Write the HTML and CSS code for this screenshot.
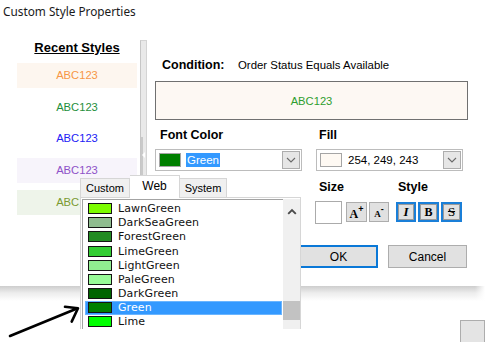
FILE: index.html
```html
<!DOCTYPE html>
<html>
<head>
<meta charset="utf-8">
<link rel="stylesheet" href="styles.css">
</head>
<body>
<div class="dialog">
  <div class="title">Custom Style Properties</div>
  <div class="body">
    <aside class="recent">
      <div class="recent-head">Recent Styles</div>
      <div class="item i1">ABC123</div>
      <div class="item i2">ABC123</div>
      <div class="item i3">ABC123</div>
      <div class="item i4">ABC123</div>
      <div class="item i5">ABC123</div>
    </aside>
    <div class="splitter">
      <div class="split-top"></div>
      <div class="split-bottom"><span class="split-tri"></span></div>
    </div>
    <main class="props">
      <div class="cond"><span class="cond-label">Condition:</span><span class="cond-val">Order Status Equals Available</span></div>
      <div class="preview">ABC123</div>
      <div class="labels"><span class="lab-font">Font Color</span><span class="lab-fill">Fill</span></div>
      <div class="combos">
        <div class="combo">
          <span class="sw sw-green"></span><span class="ctext sel">Green</span>
          <span class="drop"><svg width="10" height="6" viewBox="0 0 10 6"><polyline points="1,1 5,5 9,1" fill="none" stroke="#6a6a6a" stroke-width="1.1"/></svg></span>
        </div>
        <div class="combo">
          <span class="sw sw-fill"></span><span class="ctext">254, 249, 243</span>
          <span class="drop"><svg width="10" height="6" viewBox="0 0 10 6"><polyline points="1,1 5,5 9,1" fill="none" stroke="#6a6a6a" stroke-width="1.1"/></svg></span>
        </div>
      </div>
      <div class="sslabels"><span class="lab-size">Size</span><span class="lab-style">Style</span></div>
      <div class="tools">
        <div class="sizebox"></div>
        <div class="tbtn t-grow"><span class="ga">A</span><span class="gsup">+</span></div>
        <div class="tbtn t-shrink"><span class="ga small">A</span><span class="gsup">-</span></div>
        <div class="tbtn on t-i"><span class="gi">I</span></div>
        <div class="tbtn on t-b"><span class="gb">B</span></div>
        <div class="tbtn on t-s"><span class="gs">S</span></div>
      </div>
      <div class="actions">
        <div class="btn ok">OK</div>
        <div class="btn cancel">Cancel</div>
      </div>
    </main>
  </div>
</div>
<div class="shadow"></div>
<div class="under-btn"></div>

<div class="popup">
  <div class="tabs">
    <div class="tab custom">Custom</div>
    <div class="tab web">Web</div>
    <div class="tab system">System</div>
  </div>
  <div class="panel">
    <div class="list">
      <div class="row"><span class="swatch c-lawn"></span>LawnGreen</div>
      <div class="row"><span class="swatch c-darksea"></span>DarkSeaGreen</div>
      <div class="row"><span class="swatch c-forest"></span>ForestGreen</div>
      <div class="row"><span class="swatch c-lime-green"></span>LimeGreen</div>
      <div class="row"><span class="swatch c-light"></span>LightGreen</div>
      <div class="row"><span class="swatch c-pale"></span>PaleGreen</div>
      <div class="row"><span class="swatch c-dark"></span>DarkGreen</div>
      <div class="row selected"><span class="swatch c-green"></span>Green</div>
      <div class="row"><span class="swatch c-lime"></span>Lime</div>
    </div>
    <div class="sbar">
      <div class="sb-up"><svg width="10" height="7" viewBox="0 0 10 7"><polyline points="1.2,5.8 5,2 8.8,5.8" fill="none" stroke="#4a4a4a" stroke-width="1.9"/></svg></div>
      <div class="sb-track"><div class="sb-thumb"></div></div>
    </div>
  </div>
</div>

<svg class="arrow" width="90" height="42" viewBox="0 0 90 42">
  <line x1="10" y1="36" x2="77" y2="8.5" stroke="#000" stroke-width="2.6" stroke-linecap="round"/>
  <polyline points="65,6.8 78,8.3 71.7,21.6" fill="none" stroke="#000" stroke-width="2.6" stroke-linecap="round" stroke-linejoin="round"/>
</svg>
</body>
</html>
```

FILE: styles.css
```css
* { box-sizing: border-box; }

body {
  margin: 0;
  width: 490px;
  height: 342px;
  overflow: hidden;
  position: relative;
  background: #ffffff;
  font-family: "Liberation Sans", Arial, sans-serif;
  color: #000;
}

.dialog {
  width: 485px;
  height: 286px;
  background: #ffffff;
  display: flex;
  flex-direction: column;
}

.title {
  height: 22px;
  padding-left: 3px;
  font-family: "Noto Sans", sans-serif;
  font-size: 11.8px;
  line-height: 22px;
  color: #1a1a1a;
}

.body {
  margin-top: 18px;
  flex: 1;
  display: flex;
  min-height: 0;
}

/* recent styles */
.recent {
  width: 137px;
  padding-left: 17px;
  display: flex;
  flex-direction: column;
  gap: 6.75px;
}
.recent-head {
  height: 16px;
  line-height: 16px;
  text-align: center;
  font-weight: bold;
  font-size: 13px;
  text-decoration: underline;
}
.item {
  height: 25px;
  line-height: 25px;
  text-align: center;
  font-size: 11.2px;
  flex: none;
}
.i1 { background: #fdf6ef; color: #f79646; }
.i2 { color: #1f8f3c; }
.i3 { color: #2222f5; }
.i4 { background: #f7f4fb; color: #8e52c8; }
.i5 { background: #eef4ea; color: #7a9a30; }

/* splitter */
.splitter {
  margin-left: 3px;
  width: 7px;
  display: flex;
  flex-direction: column;
  border-left: 1px solid #c6c6c6;
  border-right: 1px solid #d4d4d4;
  border-top: 1px solid #d4d4d4;
  background: #e9e9e9;
}
.split-top { height: 96px; }
.split-bottom {
  flex: 1;
  background: linear-gradient(to right, #c9c9c9 2px, #e9e9e9 2px);
  position: relative;
}
.split-tri {
  position: absolute;
  left: 1px;
  top: 15px;
  width: 0;
  height: 0;
  border-top: 3px solid transparent;
  border-bottom: 3px solid transparent;
  border-right: 3px solid #ffffff;
}

/* properties */
.props {
  flex: 1;
  padding-left: 8px;
  display: flex;
  flex-direction: column;
}
.cond {
  margin-top: 17px;
  height: 16px;
  display: flex;
  align-items: center;
  padding-left: 7px;
}
.cond-label {
  width: 76px;
  font-weight: bold;
  font-size: 12.5px;
}
.cond-val { font-size: 11.4px; }

.preview {
  margin-top: 8px;
  width: 313px;
  height: 39px;
  border: 1px solid #707070;
  background: #fdf8f3;
  display: flex;
  align-items: center;
  justify-content: center;
  font-size: 11.2px;
  color: #2f9e2f;
}

.labels {
  margin-top: 7px;
  height: 16px;
  display: grid;
  grid-template-columns: 161px auto;
  align-items: center;
  font-weight: bold;
  font-size: 12.5px;
}
.lab-font { padding-left: 5px; }
.lab-fill { padding-left: 3px; }

.combos {
  margin-top: 6px;
  display: flex;
  gap: 14px;
}
.combo {
  width: 147px;
  height: 22px;
  border: 1px solid #bcbcbc;
  display: flex;
  align-items: center;
  padding: 0 1px 0 3px;
  background: #ffffff;
}
.sw {
  width: 22px;
  height: 14px;
  border: 1px solid #a5a5a5;
  margin-right: 5px;
  flex: none;
}
.sw-green { background: #008000; }
.sw-fill { background: #fef9f3; }
.ctext {
  font-size: 11.5px;
  height: 14px;
  line-height: 14px;
  padding: 0 1px;
}
.ctext.sel { background: #3399ff; color: #ffffff; }
.drop {
  margin-left: auto;
  width: 18px;
  height: 18px;
  border: 1px solid #adadad;
  background: #e6e6e6;
  display: flex;
  align-items: center;
  justify-content: center;
}

.sslabels {
  margin-top: 8px;
  height: 16px;
  display: flex;
  align-items: center;
  padding-left: 164px;
  font-weight: bold;
  font-size: 12.5px;
}
.lab-size { width: 79px; }

.tools {
  margin-top: 6px;
  display: flex;
  align-items: flex-start;
  padding-left: 160px;
}
.sizebox {
  width: 27px;
  height: 23px;
  border: 1px solid #ababab;
  background: #ffffff;
}
.tbtn {
  margin-top: 1px;
  height: 20px;
  width: 21px;
  border: 1px solid #adadad;
  background: #e1e1e1;
  display: flex;
  align-items: center;
  justify-content: center;
  font-family: "Liberation Serif", "Times New Roman", serif;
  color: #000;
}
.t-grow { margin-left: 4px; }
.t-shrink { margin-left: 2px; width: 20px; }
.t-i { margin-left: 7px; width: 20px; }
.t-b, .t-s { margin-left: 2px; }
.tbtn.on {
  border: 2px solid #1a7fd8;
  box-shadow: inset 0 0 0 1px #9a9a9a;
}
.ga { font-size: 12px; font-weight: bold; line-height: 1; margin-top: 3px; }
.ga.small { font-size: 9px; margin-top: 5px; }
.gsup { font-family: "Liberation Sans", sans-serif; font-size: 9px; font-weight: bold; line-height: 1; margin-top: -6px; }
.gi { font-style: italic; font-size: 13px; font-weight: bold; }
.gb { font-size: 12px; font-weight: bold; }
.gs { font-size: 13px; text-decoration: line-through; }

.actions {
  margin-top: 21px;
  display: flex;
  padding-left: 144px;
  gap: 10px;
}
.btn {
  width: 79px;
  height: 23px;
  background: #e1e1e1;
  border: 1px solid #adadad;
  display: flex;
  align-items: center;
  justify-content: center;
  font-size: 12px;
}
.btn.ok { border: 2px solid #0a78d7; }

/* below the dialog */
.shadow {
  width: 485px;
  height: 15px;
  background:
    linear-gradient(to left, #ffffff 0, rgba(255,255,255,0) 10px),
    linear-gradient(#cdcdcd, #ececec 45%, #ffffff);
}
.under-btn {
  margin-top: 19px;
  margin-left: 460px;
  width: 25px;
  height: 30px;
  background: #e4e4e4;
  border: 1px solid #adadad;
}

/* popup color picker */
.popup {
  position: absolute;
  left: 80px;
  top: 174px;
  width: 221px;
  height: 155px;
  display: flex;
  flex-direction: column;
}
.tabs {
  height: 23px;
  display: flex;
  align-items: flex-start;
  position: relative;
  z-index: 1;
}
.tab {
  margin-top: 4px;
  height: 19px;
  border: 1px solid #d6d6d6;
  border-bottom: none;
  background: #f0f0f0;
  font-size: 11px;
  line-height: 18px;
  text-align: center;
}
.tab.custom { width: 50px; }
.tab.web {
  margin-top: 1px;
  width: 50px;
  height: 23px;
  background: #ffffff;
  font-size: 12px;
  line-height: 20px;
  border-left: none;
}
.tab.system { width: 47px; border-left: none; }

.panel {
  flex: 1;
  border: 1px solid #d6d6d6;
  border-bottom: none;
  padding: 1px 0 0 1px;
  background: #ffffff;
  display: flex;
  min-height: 0;
}
.list {
  width: 201px;
  border-left: 1px solid #a3a3a3;
  border-top: 1px solid #a3a3a3;
  padding-top: 1.6px;
  overflow: hidden;
}
.row {
  height: 14.16px;
  margin: 0 1px 0 2px;
  padding-left: 3px;
  display: flex;
  align-items: center;
  font-family: "DejaVu Sans", sans-serif;
  font-size: 11px;
  letter-spacing: 0.1px;
  color: #111;
}
.row.selected {
  background: #3399ff;
  color: #ffffff;
  box-shadow: inset 0 0 0 1px #6ab5ff;
}
.swatch {
  width: 24px;
  height: 11px;
  border: 1px solid #141414;
  margin-right: 6px;
  flex: none;
}
.c-lawn { background: #7cfc00; }
.c-darksea { background: #8fbc8f; }
.c-forest { background: #228b22; }
.c-lime-green { background: #32cd32; }
.c-light { background: #90ee90; }
.c-pale { background: #98fb98; }
.c-dark { background: #006400; }
.c-green { background: #008000; }
.c-lime { background: #00ff00; }

.sbar {
  width: 17px;
  background: #f0f0f0;
  display: flex;
  flex-direction: column;
}
.sb-up {
  height: 24px;
  display: flex;
  align-items: center;
  justify-content: center;
}
.sb-track { flex: 1; }
.sb-thumb {
  margin-top: 78px;
  height: 19px;
  background: #c2c2c2;
}

.arrow {
  position: absolute;
  left: 0;
  top: 300px;
}
```
